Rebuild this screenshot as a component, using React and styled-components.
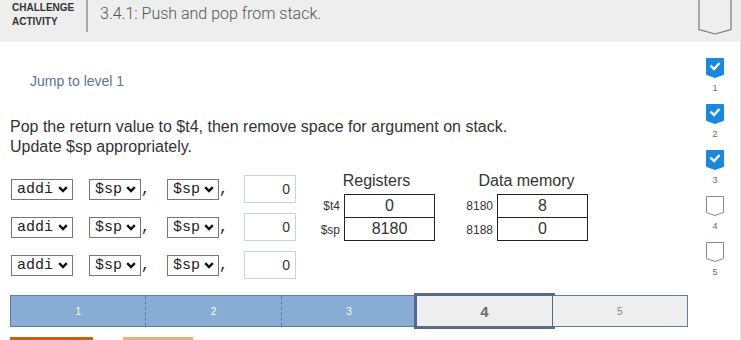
import React from 'react';
import styled, { createGlobalStyle } from 'styled-components';

const GlobalStyle = createGlobalStyle`
  html, body {
    margin:0;
    padding:0;
    background:#fff;
  }
  #root {
    width:741px;
    height:340px;
    overflow:hidden;
  }
`

const Page = styled.div`
  width:741px;
  height:340px;
  display:flex;
  flex-direction:column;
  font-family:"Liberation Sans", Arial, sans-serif;
  color:#333;
`

const Header = styled.div`
  height:42px;
  flex-shrink:0;
  display:flex;
  align-items:flex-start;
  background-color:#eeeeee;
`

const ActivityLabel = styled.div`
  width:88px;
  height:32px;
  box-sizing:border-box;
  padding:1px 0 0 12px;
  border-right:2px solid #a9a9a9;
  font-size:10px;
  font-weight:700;
  line-height:14px;
  color:#333;
`

const Title = styled.div`
  margin-left:12px;
  padding-top:4px;
  font-family:Roboto, "Liberation Sans", sans-serif;
  font-size:16px;
  font-weight:300;
  line-height:20px;
  color:#555;
`

const Badge = styled.svg`
  margin-left:auto;
  margin-right:9px;
  display:block;
`

const Body = styled.div`
  flex:1;
  display:flex;
`

const Content = styled.div`
  width:697px;
  box-sizing:border-box;
  padding:0 9px 0 10px;
  display:flex;
  flex-direction:column;
`

const JumpLink = styled.div`
  margin:31px 0 0 20px;
  font-size:14px;
  line-height:16px;
  color:#5d7496;
`

const Prompt = styled.div`
  margin-top:28px;
  font-size:16px;
  line-height:20px;
  color:#333;
`

const Exercise = styled.div`
  margin-top:15px;
  display:flex;
  align-items:flex-start;
`

const Rows = styled.div`
  padding:3px 0 0 1px;
  display:flex;
  flex-direction:column;
  gap:10px;
`

const Row = styled.div`
  height:28px;
  display:flex;
  align-items:center;
`

const Operand = styled.div`
  margin-left:16px;
  display:flex;
  align-items:center;
`

const FakeSelect = styled.div`
  width:${({ $w }) => $w}px;
  height:21px;
  box-sizing:border-box;
  border:1px solid #767676;
  background:#fff;
  padding:0 4px 0 5px;
  display:flex;
  align-items:center;
  justify-content:space-between;
  font-family:"Liberation Mono", "Courier New", monospace;
  font-size:15px;
  color:#222;
`

const Comma = styled.span`
  width:10px;
  font-family:"Liberation Mono", "Courier New", monospace;
  font-size:15px;
  line-height:21px;
  color:#222;
`

const ValueInput = styled.input`
  width:52px;
  height:28px;
  margin-left:15px;
  box-sizing:border-box;
  border:1px solid #c9d1d8;
  padding:0 5px 0 0;
  text-align:right;
  font-family:"Liberation Sans", Arial, sans-serif;
  font-size:14px;
  color:#333;
  outline:none;
`

const StatePanel = styled.div`
  margin-left:22px;
  display:flex;
  gap:30px;
`

const Block = styled.div`
  display:flex;
  flex-direction:column;
  align-items:center;
`

const BlockTitle = styled.div`
  font-size:16px;
  line-height:18px;
  margin-bottom:4px;
  color:#333;
`

const Grid = styled.div`
  display:grid;
  grid-template-columns:${({ $label }) => $label}px 91px;
  column-gap:4px;
`

const CellLabel = styled.div`
  align-self:center;
  text-align:right;
  font-size:12px;
  color:#333;
`

const Cell = styled.div`
  height:${({ $top }) => ($top ? 24 : 23)}px;
  box-sizing:border-box;
  border:1px solid #222;
  border-top:${({ $top }) => ($top ? '1px solid #222' : 'none')};
  display:flex;
  align-items:center;
  justify-content:center;
  font-size:16px;
  color:#333;
`

const LevelBar = styled.div`
  margin-top:16px;
  height:32px;
  box-sizing:border-box;
  border:1px solid #5a7ea6;
  display:flex;
`

const Segment = styled.div`
  flex:1 1 0;
  display:flex;
  align-items:center;
  justify-content:center;
  font-size:10px;
  background-color:${({ $done }) => ($done ? '#88acd3' : '#eeeeee')};
  color:${({ $done }) => ($done ? '#fff' : '#888')};
  border-left:${({ $dashed }) => ($dashed ? '1px dashed #4f77a0' : 'none')};
`

const CurrentSegment = styled.div`
  flex:1 1 0;
  margin:-3px -2px;
  border:3px solid #566b8c;
  background-color:#eeeeee;
  display:flex;
  align-items:center;
  justify-content:center;
  font-size:15px;
  font-weight:700;
  color:#6b6b6b;
`

const Buttons = styled.div`
  margin-top:10px;
  display:flex;
  gap:30px;
`

const ActionButton = styled.button`
  width:${({ $w }) => $w}px;
  height:30px;
  border:none;
  padding:0;
  background-color:${({ $bg }) => $bg};
`

const Sidebar = styled.div`
  width:44px;
  box-sizing:border-box;
  border-right:1px solid #e2e2e2;
  padding:16px 0 0 9px;
  display:flex;
  flex-direction:column;
  gap:10px;
`

const LevelMark = styled.div`
  width:18px;
  display:flex;
  flex-direction:column;
  align-items:center;
  gap:4px;
`

const MarkLabel = styled.div`
  font-size:9px;
  line-height:12px;
  color:#666;
`

function Chevron() {
  return (
    <svg width="10" height="7" viewBox="0 0 10 7">
      <path d="M1.2 1.2 L5 5 L8.8 1.2" fill="none" stroke="#111" strokeWidth="2.4" />
    </svg>
  )
}

function Shield({ done }) {
  return (
    <svg width="18" height="20" viewBox="0 0 18 20">
      <path
        d="M0.5 0.5 H17.5 V16.5 L9 19.5 L0.5 16.5 Z"
        fill={done ? '#1a88dc' : '#fff'}
        stroke={done ? '#1a88dc' : '#888'}
      />
      {done && (
        <path d="M4.5 7.5 L8 11 L13.5 5" fill="none" stroke="#fff" strokeWidth="2.4" />
      )}
    </svg>
  )
}

const rows = [0, 1, 2];
const levels = [1, 2, 3, 4, 5];
const current = 4;

export default function App() {
  return (
    <Page>
      <GlobalStyle />
      <Header>
        <ActivityLabel>CHALLENGE<br />ACTIVITY</ActivityLabel>
        <Title>3.4.1: Push and pop from stack.</Title>
        <Badge width="34" height="35" viewBox="0 0 34 35">
          <path d="M1 -1 V29.5 L17 34 L33 29.5 V-1" fill="none" stroke="#777" strokeWidth="1.2" />
        </Badge>
      </Header>
      <Body>
        <Content>
          <JumpLink>Jump to level 1</JumpLink>
          <Prompt>
            Pop the return value to $t4, then remove space for argument on stack.<br />
            Update $sp appropriately.
          </Prompt>
          <Exercise>
            <Rows>
              {rows.map(i => (
                <Row key={i}>
                  <FakeSelect $w={62}>addi<Chevron /></FakeSelect>
                  <Operand>
                    <FakeSelect $w={52}>$sp<Chevron /></FakeSelect>
                    <Comma>,</Comma>
                  </Operand>
                  <Operand>
                    <FakeSelect $w={52}>$sp<Chevron /></FakeSelect>
                    <Comma>,</Comma>
                  </Operand>
                  <ValueInput defaultValue="0" />
                </Row>
              ))}
            </Rows>
            <StatePanel>
              <Block>
                <BlockTitle>Registers</BlockTitle>
                <Grid $label={22}>
                  <CellLabel>$t4</CellLabel>
                  <Cell $top>0</Cell>
                  <CellLabel>$sp</CellLabel>
                  <Cell>8180</Cell>
                </Grid>
              </Block>
              <Block>
                <BlockTitle>Data memory</BlockTitle>
                <Grid $label={28}>
                  <CellLabel>8180</CellLabel>
                  <Cell $top>8</Cell>
                  <CellLabel>8188</CellLabel>
                  <Cell>0</Cell>
                </Grid>
              </Block>
            </StatePanel>
          </Exercise>
          <LevelBar>
            {levels.map(n =>
              n === current ? (
                <CurrentSegment key={n}>{n}</CurrentSegment>
              ) : (
                <Segment key={n} $done={n < current} $dashed={n > 1 && n < current}>{n}</Segment>
              )
            )}
          </LevelBar>
          <Buttons>
            <ActionButton $w={83} $bg="#c9620c" aria-label="Check" />
            <ActionButton $w={70} $bg="#e7b07e" aria-label="Next" />
          </Buttons>
        </Content>
        <Sidebar>
          {levels.map(n => (
            <LevelMark key={n}>
              <Shield done={n < current} />
              <MarkLabel>{n}</MarkLabel>
            </LevelMark>
          ))}
        </Sidebar>
      </Body>
    </Page>
  )
}
